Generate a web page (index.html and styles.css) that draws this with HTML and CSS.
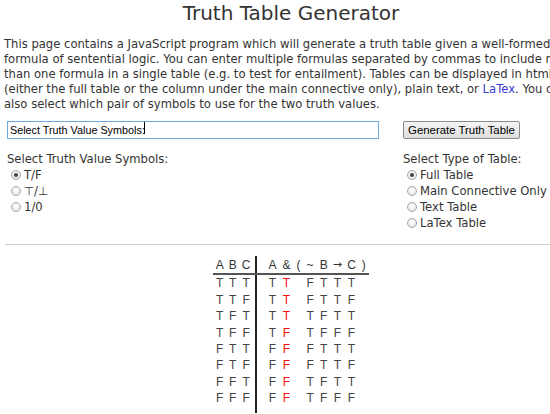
FILE: index.html
```html
<!DOCTYPE html>
<html>
<head>
<meta charset="utf-8">
<title>Truth Table Generator</title>
<link rel="stylesheet" href="styles.css">
</head>
<body>
<div class="page">
  <h1 class="title">Truth Table Generator</h1>
  <p class="intro">This page contains a JavaScript program which will generate a truth table given a well-formed<br>formula of sentential logic. You can enter multiple formulas separated by commas to include more<br>than one formula in a single table (e.g. to test for entailment). Tables can be displayed in html<br>(either the full table or the column under the main connective only), plain text, or <a class="link" href="#">LaTex</a>. You can<br>also select which pair of symbols to use for the two truth values.</p>
  <form class="form">
    <div class="formula-wrap"><input class="formula" type="text" value="Select Truth Value Symbols:"><span class="caret"></span></div>
    <div><button class="btn" type="button">Generate Truth Table</button></div>
    <div class="group">
      <div class="group-title">Select Truth Value Symbols:</div>
      <label class="opt"><input class="radio" type="radio" name="sym" checked>T/F</label>
      <label class="opt"><input class="radio" type="radio" name="sym">⊤/⊥</label>
      <label class="opt"><input class="radio" type="radio" name="sym">1/0</label>
    </div>
    <div class="group">
      <div class="group-title">Select Type of Table:</div>
      <label class="opt"><input class="radio" type="radio" name="type" checked>Full Table</label>
      <label class="opt"><input class="radio" type="radio" name="type">Main Connective Only</label>
      <label class="opt"><input class="radio" type="radio" name="type">Text Table</label>
      <label class="opt"><input class="radio" type="radio" name="type">LaTex Table</label>
    </div>
  </form>
  <hr class="rule">
  <table class="tt">
    <tr class="spacer"><td></td><td></td><td class="div"></td><td class="first"></td><td></td><td></td><td></td><td></td><td></td><td></td><td></td></tr>
    <tr class="head"><td class="l">A</td><td class="l">B</td><td class="l div">C</td><td class="first">A</td><td>&amp;</td><td>(</td><td>~</td><td>B</td><td class="arrow">→</td><td>C</td><td>)</td></tr>
    <tr><td class="l">T</td><td class="l">T</td><td class="l div">T</td><td class="first">T</td><td class="main">T</td><td></td><td>F</td><td>T</td><td>T</td><td>T</td><td></td></tr>
    <tr><td class="l">T</td><td class="l">T</td><td class="l div">F</td><td class="first">T</td><td class="main">T</td><td></td><td>F</td><td>T</td><td>T</td><td>F</td><td></td></tr>
    <tr><td class="l">T</td><td class="l">F</td><td class="l div">T</td><td class="first">T</td><td class="main">T</td><td></td><td>T</td><td>F</td><td>T</td><td>T</td><td></td></tr>
    <tr><td class="l">T</td><td class="l">F</td><td class="l div">F</td><td class="first">T</td><td class="main">F</td><td></td><td>T</td><td>F</td><td>F</td><td>F</td><td></td></tr>
    <tr><td class="l">F</td><td class="l">T</td><td class="l div">T</td><td class="first">F</td><td class="main">F</td><td></td><td>F</td><td>T</td><td>T</td><td>T</td><td></td></tr>
    <tr><td class="l">F</td><td class="l">T</td><td class="l div">F</td><td class="first">F</td><td class="main">F</td><td></td><td>F</td><td>T</td><td>T</td><td>F</td><td></td></tr>
    <tr><td class="l">F</td><td class="l">F</td><td class="l div">T</td><td class="first">F</td><td class="main">F</td><td></td><td>T</td><td>F</td><td>T</td><td>T</td><td></td></tr>
    <tr><td class="l">F</td><td class="l">F</td><td class="l div">F</td><td class="first">F</td><td class="main">F</td><td></td><td>T</td><td>F</td><td>F</td><td>F</td><td></td></tr>
    <tr class="tail"><td></td><td></td><td class="div"></td><td class="first"></td><td></td><td></td><td></td><td></td><td></td><td></td><td></td></tr>
  </table>
</div>
</body>
</html>
```

FILE: styles.css
```css
html, body {
  margin: 0;
  padding: 0;
  overflow: hidden;
  background: #fff;
}
body {
  font-family: "DejaVu Sans", Verdana, sans-serif;
  color: #333;
}
.page {
  width: 574px;
  margin-left: 4px;
}
.title {
  margin: 0;
  font-size: 20px;
  font-weight: normal;
  line-height: 26px;
  text-align: center;
  color: #333;
}
.intro {
  margin: 11px 0 0 0;
  font-size: 11.6px;
  line-height: 15px;
  white-space: nowrap;
}
.link {
  color: #3b3bd0;
  text-decoration: none;
}
.form {
  display: grid;
  grid-template-columns: 396px auto;
  row-gap: 13px;
  margin: 7px 0 0 3px;
}
.formula-wrap {
  position: relative;
  width: 372px;
}
.formula {
  box-sizing: border-box;
  width: 372px;
  height: 18px;
  margin: 0;
  padding: 0 2px;
  border: 1px solid #6fa8dc;
  font-family: "Liberation Sans", Arial, sans-serif;
  font-size: 10.8px;
  color: #000;
  outline: none;
}
.caret {
  position: absolute;
  left: 137px;
  top: 3px;
  width: 1px;
  height: 12px;
  background: #000;
}
.btn {
  box-sizing: border-box;
  height: 18px;
  width: 117px;
  margin: 0;
  padding: 0;
  border: 1px solid #8a8a8a;
  border-radius: 2px;
  background: linear-gradient(#f4f4f4, #dedede);
  font-family: "Liberation Sans", Arial, sans-serif;
  font-size: 11.4px;
  color: #000;
}
.group {
  display: flex;
  flex-direction: column;
  font-size: 11.6px;
}
.group-title {
  line-height: 14px;
  margin-bottom: 1px;
}
.opt {
  display: flex;
  align-items: center;
  height: 16px;
  line-height: 16px;
}
.radio {
  appearance: none;
  -webkit-appearance: none;
  box-sizing: border-box;
  width: 10px;
  height: 10px;
  margin: 0 3px 0 4px;
  border: 1px solid #a6a6a6;
  border-radius: 50%;
  background: radial-gradient(circle at 50% 40%, #ffffff 0%, #e9e9e9 70%, #dcdcdc 100%);
  position: relative;
}
.radio:checked::after {
  content: "";
  position: absolute;
  left: 2px;
  top: 2px;
  width: 4px;
  height: 4px;
  border-radius: 50%;
  background: #444;
}
.rule {
  margin: 13px 0 0 1px;
  border: 0;
  border-top: 1px solid #cfcfcf;
  height: 0;
}
.tt {
  margin: 11px auto 0 auto;
  border-collapse: collapse;
  font-family: "Liberation Sans", Arial, sans-serif;
  font-size: 12px;
  color: #444;
}
.tt td {
  padding: 0 3px;
  line-height: 16.4px;
  text-align: center;
}
.tt td.l {
  padding: 0 2.5px;
}
.tt td.arrow {
  font-family: "DejaVu Sans", sans-serif;
  font-size: 11px;
  padding: 0 2px;
}
.tt .spacer td {
  line-height: 1px;
  height: 1px;
}
.tt .tail td {
  height: 6px;
  line-height: 6px;
}
.tt .head td {
  border-bottom: 2px solid #555;
  color: #333;
}
.tt td.div {
  border-right: 2px solid #222;
  padding-right: 5px;
}
.tt td.first {
  padding-left: 11px;
}
.tt td.main {
  color: #f01010;
}
```
